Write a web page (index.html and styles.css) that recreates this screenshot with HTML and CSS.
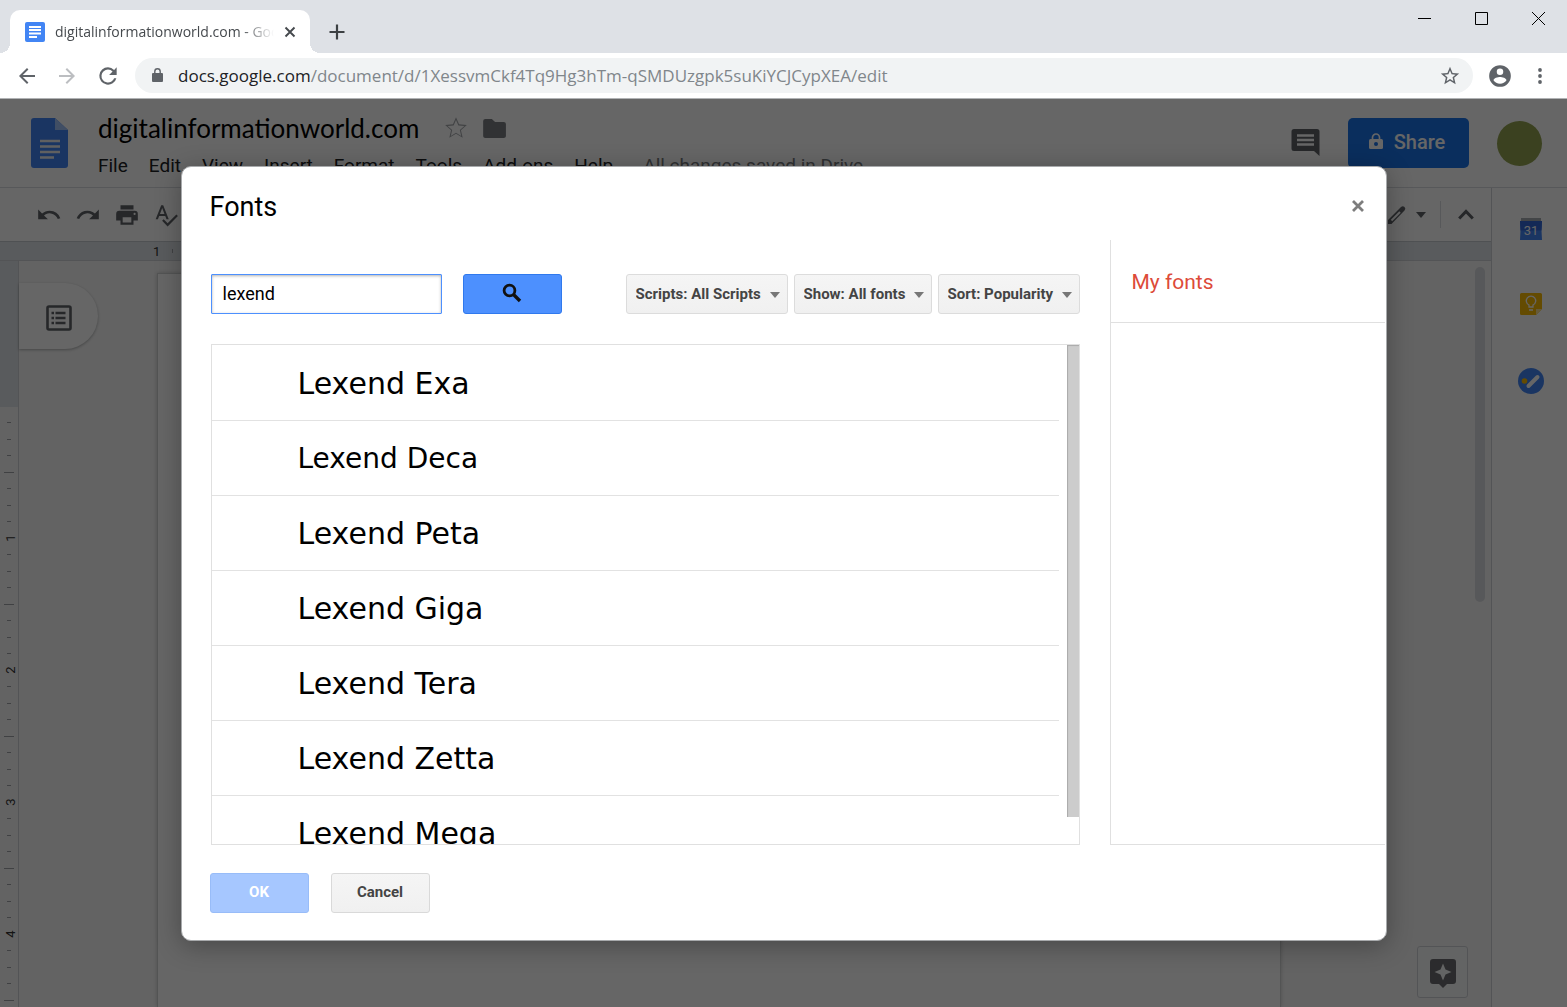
FILE: index.html
```html
<!DOCTYPE html>
<html lang="en">
  <head>
    <meta charset="UTF-8" />
    <meta name="viewport" content="width=device-width, initial-scale=1.0" />
    <title>digitalinformationworld.com - Google Docs</title>
    <link rel="stylesheet" href="styles.css">
  </head>

  <body>
    <!-- Browser window -->
    <div class="tabstrip">
      <div class="tab">
        <svg class="favicon" width="20" height="20" viewBox="0 0 20 20">
          <rect width="20" height="20" rx="2" fill="#4285f4" />
          <path d="M4 5h12M4 8h12M4 11.500h12M4 15h8" stroke="#fff" stroke-width="1.800" />
        </svg>
        <span class="tab-title">digitalinformationworld.com - Google Docs</span>
        <button class="icon-btn" aria-label="Close tab">
          <svg width="12" height="12" viewBox="0 0 12 12"><path d="M1.500 1.500l9 9M10.500 1.500l-9 9" stroke="#45494d" stroke-width="1.900" /></svg>
        </button>
      </div>
      <button class="icon-btn new-tab" aria-label="New tab">
        <svg width="16" height="16" viewBox="0 0 16 16"><path d="M8 .5v15M.5 8h15" stroke="#3c4043" stroke-width="2.200" /></svg>
      </button>
      <div class="window-controls">
        <button class="icon-btn" aria-label="Minimize">
          <svg width="13" height="13" viewBox="0 0 13 13"><path d="M0 6.500h13" stroke="#000" /></svg>
        </button>
        <button class="icon-btn" aria-label="Maximize">
          <svg width="13" height="13" viewBox="0 0 13 13"><path d="M.5.5h12v12H.5z" stroke="#000" fill="none" /></svg>
        </button>
        <button class="icon-btn" aria-label="Close">
          <svg width="13" height="13" viewBox="0 0 13 13"><path d="M0 0l13 13M13 0L0 13" stroke="#000" /></svg>
        </button>
      </div>
    </div>

    <div class="navbar">
      <div class="nav-buttons">
        <button class="icon-btn" aria-label="Back">
          <svg width="24" height="24" viewBox="0 0 24 24" fill="#5f6368"><path d="M20 11H7.830l5.590-5.590L12 4l-8 8 8 8 1.410-1.410L7.830 13H20z" /></svg>
        </button>
        <button class="icon-btn" aria-label="Forward">
          <svg width="24" height="24" viewBox="0 0 24 24" fill="#bcbec1"><path d="M12 4l-1.410 1.410L16.170 11H4v2h12.170l-5.580 5.590L12 20l8-8z" /></svg>
        </button>
        <button class="icon-btn" aria-label="Reload">
          <svg width="26" height="26" viewBox="0 0 24 24" fill="#5f6368"><path d="M17.650 6.350A7.960 7.960 0 0 0 12 4a8 8 0 1 0 7.730 10h-2.080A6 6 0 1 1 12 6c1.660 0 3.140.690 4.220 1.780L13 11h7V4z" /></svg>
        </button>
      </div>
      <div class="omnibox">
        <svg width="11" height="15" viewBox="0 0 11 15"><rect y="5" width="11" height="9" rx="1" fill="#5f6368" /><path d="M2.800 6V3.500a2.700 2.700 0 0 1 5.400 0V6" fill="none" stroke="#5f6368" stroke-width="1.400" /></svg>
        <span class="url"><span class="url-host">docs.google.com</span>/document/d/1XessvmCkf4Tq9Hg3hTm-qSMDUzgpk5suKiYCJCypXEA/edit</span>
        <button class="icon-btn" aria-label="Bookmark this page">
          <svg width="22" height="22" viewBox="0 0 24 24" fill="#5f6368"><path d="M22 9.240l-7.190-.620L12 2 9.190 8.630 2 9.240l5.460 4.730L5.820 21 12 17.270 18.180 21l-1.630-7.030zM12 15.400l-3.760 2.270 1-4.280-3.320-2.880 4.380-.380L12 6.100l1.710 4.040 4.380.380-3.320 2.880 1 4.280z" /></svg>
        </button>
      </div>
      <button class="icon-btn" aria-label="Profile">
        <svg width="26" height="26" viewBox="0 0 24 24" fill="#5f6368"><path d="M12 2a10 10 0 1 0 0 20 10 10 0 0 0 0-20zm0 3a3 3 0 1 1 0 6 3 3 0 0 1 0-6zm0 14.200a7.200 7.200 0 0 1-6-3.220c.030-1.990 4-3.080 6-3.080s5.970 1.090 6 3.080a7.200 7.200 0 0 1-6 3.220z" /></svg>
      </button>
      <button class="icon-btn menu-dots" aria-label="Menu">
        <svg width="4" height="16" viewBox="0 0 4 16" fill="#5f6368"><circle cx="2" cy="2" r="1.900" /><circle cx="2" cy="8" r="1.900" /><circle cx="2" cy="14" r="1.900" /></svg>
      </button>
    </div>

    <!-- Docs -->
    <div class="docs">
      <header class="docs-header">
        <svg width="37" height="50" viewBox="0 0 37 50">
          <path d="M3 0h21l13 12v35a3 3 0 0 1-3 3H3a3 3 0 0 1-3-3V3a3 3 0 0 1 3-3z" fill="#4285f4" />
          <path d="M24 0l13 12H24z" fill="#a1c2fa" />
          <path d="M9 23h20M9 28.500h20M9 34h20M9 39.500h14" stroke="#f1f1f1" stroke-width="2.600" />
        </svg>
        <div class="docs-heading">
          <div class="title-row">
            <input class="doc-title" type="text" aria-label="Rename" value="digitalinformationworld.com" />
            <button class="icon-btn" aria-label="Star">
              <svg width="26" height="26" viewBox="0 0 24 24" fill="#a4a7ab"><path d="M22 9.240l-7.190-.620L12 2 9.190 8.630 2 9.240l5.460 4.730L5.820 21 12 17.270 18.180 21l-1.630-7.030zM12 16.400l-4.800 2.900 1.250-5.450-4.200-3.650 5.550-.500L12 4.600l2.200 5.100 5.550.500-4.200 3.650 1.250 5.450z" /></svg>
            </button>
            <button class="icon-btn" aria-label="Move">
              <svg width="26" height="24" viewBox="0 0 24 24" preserveAspectRatio="none" fill="#7b7e82"><path d="M10 3H4a2 2 0 0 0-2 2v15c0 1.100.9 2 2 2h17c1.100 0 2-.9 2-2V8a2 2 0 0 0-2-2h-8z" /></svg>
            </button>
          </div>
          <div class="menubar">
            <button>File</button>
            <button>Edit</button>
            <button>View</button>
            <button>Insert</button>
            <button>Format</button>
            <button>Tools</button>
            <button>Add-ons</button>
            <button>Help</button>
            <span class="save-state">All changes saved in Drive</span>
          </div>
        </div>
        <button class="icon-btn comments" aria-label="Comments">
          <svg width="29" height="29" viewBox="0 0 29 29"><path d="M3 1h23a2.500 2.500 0 0 1 2.500 2.500V28L23 23H3a2.500 2.500 0 0 1-2.500-2.500v-17A2.500 2.500 0 0 1 3 1z" fill="#5f6368" /><path d="M6 7.500h17M6 12h17M6 16.500h17" stroke="#fff" stroke-width="2.500" /></svg>
        </button>
        <button class="share">
          <svg width="14" height="17" viewBox="0 0 14 17"><path d="M3.500 7V4.500a3.500 3.500 0 0 1 7 0V7" fill="none" stroke="#fff" stroke-width="1.700" /><rect y="6" width="14" height="10" rx="1.500" fill="#fff" /><circle cx="7" cy="11" r="2" fill="#1a73e8" /></svg>
          Share
        </button>
        <div class="avatar"></div>
      </header>

      <div class="workspace">
        <main class="editor">
          <div class="toolbar">
            <button class="icon-btn" aria-label="Undo">
              <svg width="26" height="26" viewBox="0 0 24 24" fill="#5f6368"><path d="M12.500 8c-2.650 0-5.050.990-6.900 2.600L2 7v9h9l-3.620-3.620a8 8 0 0 1 12.700 3.390l2.370-.780A10.500 10.500 0 0 0 12.500 8z" /></svg>
            </button>
            <button class="icon-btn" aria-label="Redo">
              <svg width="26" height="26" viewBox="0 0 24 24" fill="#5f6368"><path d="M18.400 10.600A10.500 10.500 0 0 0 1.540 15l2.360.780a8 8 0 0 1 12.700-3.390L13 16h9V7z" /></svg>
            </button>
            <button class="icon-btn" aria-label="Print">
              <svg width="26" height="26" viewBox="0 0 24 24" fill="#5f6368"><path d="M19 8H5a3 3 0 0 0-3 3v6h4v4h12v-4h4v-6a3 3 0 0 0-3-3zm-3 11H8v-5h8zm3-7a1 1 0 1 1 0-2 1 1 0 0 1 0 2zM18 3H6v4h12z" /></svg>
            </button>
            <button class="icon-btn" aria-label="Spelling and grammar check">
              <svg width="26" height="26" viewBox="0 0 24 24" fill="#5f6368"><path d="M12.450 16h2.090L9.430 3H7.570L2.460 16h2.090l1.120-3h5.640zm-6.020-5L8.500 5.480 10.570 11zm15.160.590l-8.090 8.090L9.830 16l-1.410 1.410 5.090 5.090L23 13z" /></svg>
            </button>
            <div class="toolbar-end">
              <button class="icon-btn" aria-label="Editing mode">
                <svg width="22" height="22" viewBox="0 0 22 22"><path d="M2 20v-4L15 3a2.500 2.500 0 0 1 3.500 0 2.500 2.500 0 0 1 0 3.500L5.500 20z" fill="#5f6368" /><path d="M5.500 16.500L14 8" stroke="#fff" stroke-width="2" /></svg>
                <svg width="10" height="6" viewBox="0 0 10 6"><path d="M0 0h10L5 6z" fill="#5f6368" /></svg>
              </button>
              <span class="toolbar-divider"></span>
              <button class="icon-btn" aria-label="Hide the menus">
                <svg width="16" height="11" viewBox="0 0 16 11"><path d="M1.200 9.500L8 2.500l6.800 7" fill="none" stroke="#5f6368" stroke-width="3" /></svg>
              </button>
            </div>
          </div>
          <div class="ruler-top"><span>1</span><i></i></div>
          <div class="canvas">
            <svg class="ruler-left" width="18" height="747">
              <defs>
                <g id="inch">
                  <path d="M7 15.500h4M7 32.500h4M7 48.500h4M4 65.500h10M7 81.500h4M7 98.500h4M7 114.500h4" stroke="#a0a3a7" />
                </g>
              </defs>
              <rect width="18" height="146" fill="#dfe3e8" />
              <use href="#inch" y="146" />
              <use href="#inch" y="278" />
              <use href="#inch" y="410" />
              <use href="#inch" y="542" />
              <use href="#inch" y="674" />
              <text transform="translate(15 277) rotate(-90)">1</text>
              <text transform="translate(15 409) rotate(-90)">2</text>
              <text transform="translate(15 541) rotate(-90)">3</text>
              <text transform="translate(15 673) rotate(-90)">4</text>
            </svg>
            <button class="outline-btn" aria-label="Show document outline">
              <svg width="26" height="26" viewBox="0 0 26 26"><rect x="1.500" y="1.500" width="23" height="23" rx="1.500" fill="none" stroke="#5f6368" stroke-width="2.600" /><path d="M5.500 8H8M5.500 13H8M5.500 18H8M9.500 8h10M9.500 13h10M9.500 18h10" stroke="#5f6368" stroke-width="2.500" /></svg>
            </button>
            <div class="paper"></div>
            <div class="page-scroll"></div>
            <button class="explore" aria-label="Explore">
              <svg width="26" height="30" viewBox="0 0 26 30"><path d="M3 0h20a3 3 0 0 1 3 3v19a3 3 0 0 1-3 3h-6l-4 4-4-4H3a3 3 0 0 1-3-3V3a3 3 0 0 1 3-3z" fill="#6b6d70" /><path d="M13 4.500l2.500 6 6 2.500-6 2.500-2.500 6-2.500-6-6-2.500 6-2.500z" fill="#f8f9fa" /></svg>
            </button>
          </div>
        </main>
        <aside class="side-panel">
          <button class="icon-btn" aria-label="Calendar">
            <svg width="22" height="22" viewBox="0 0 22 22"><path d="M1 0h20v5H1z" fill="#a9acb1" /><path d="M0 3h22l-.5 9.500.5 9.500H0l.5-9.500z" fill="#4285f4" /><path d="M0 3h22l-.5 9.500H.5z" fill="#3367d6" /><text class="cal-day" x="11" y="17">31</text></svg>
          </button>
          <button class="icon-btn" aria-label="Keep">
            <svg width="22" height="22" viewBox="0 0 22 22"><path d="M1.500 0h19A1.500 1.500 0 0 1 22 1.500V16l-6 6H1.500A1.500 1.500 0 0 1 0 20.500v-19A1.500 1.500 0 0 1 1.500 0z" fill="#fbbc04" /><path d="M16 22v-6h6z" fill="#fde293" /><path d="M9 14v-2a4.700 4.700 0 1 1 4 0v2zM9 17h4" fill="none" stroke="#fff" stroke-width="1.300" /></svg>
          </button>
          <button class="icon-btn" aria-label="Tasks">
            <svg width="26" height="26" viewBox="0 0 26 26"><circle cx="13" cy="13" r="13" fill="#4285f4" /><circle cx="6.500" cy="13" r="2.800" fill="#fbbc04" /><path d="M10.500 18l9-9" stroke="#fff" stroke-width="4" stroke-linecap="round" /></svg>
          </button>
        </aside>
      </div>

      <!-- Fonts dialog -->
      <div class="overlay">
        <div class="dialog" role="dialog" aria-labelledby="dialogTitle">
          <div class="dialog-head">
            <h2 id="dialogTitle">Fonts</h2>
            <button class="icon-btn" aria-label="Close dialog">
              <svg width="12" height="12" viewBox="0 0 12 12"><path d="M1 1l10 10M11 1L1 11" stroke="#7d7d7d" stroke-width="2.800" /></svg>
            </button>
          </div>
          <div class="dialog-body">
            <section class="picker">
              <form class="filters">
                <input class="search-input" type="text" aria-label="Search fonts" value="lexend" />
                <button class="btn btn-search" type="button" aria-label="Search">
                  <svg width="20" height="20" viewBox="0 0 20 20"><circle cx="7.500" cy="7.500" r="5.400" fill="none" stroke="#111" stroke-width="2.800" /><path d="M11.500 11.500l6.500 6.500" stroke="#111" stroke-width="3.400" /></svg>
                </button>
                <div class="selects">
                  <span class="select-box"><select aria-label="Scripts"><option>Scripts: All Scripts</option></select></span>
                  <span class="select-box"><select aria-label="Show"><option>Show: All fonts</option></select></span>
                  <span class="select-box"><select aria-label="Sort"><option>Sort: Popularity</option></select></span>
                </div>
              </form>
              <div class="font-list">
                <ul>
                  <li>Lexend Exa</li>
                  <li class="deca">Lexend Deca</li>
                  <li>Lexend Peta</li>
                  <li>Lexend Giga</li>
                  <li>Lexend Tera</li>
                  <li>Lexend Zetta</li>
                  <li>Lexend Mega</li>
                </ul>
                <div class="list-scroll"></div>
              </div>
            </section>
            <section class="my-fonts">
              <h3>My fonts</h3>
            </section>
          </div>
          <div class="dialog-foot">
            <button class="btn btn-ok" disabled>OK</button>
            <button class="btn">Cancel</button>
          </div>
        </div>
      </div>
    </div>
  </body>
</html>
```

FILE: styles.css
```css
* {
  box-sizing: border-box;
}

body {
  margin: 0;
  height: 100vh;
  display: flex;
  flex-direction: column;
  overflow: hidden;
  font-family: Roboto, Arial, sans-serif;
  color: #000;
}

button,
input,
select {
  font-family: inherit;
}

svg {
  display: block;
  flex: none;
}

.icon-btn {
  display: flex;
  align-items: center;
  justify-content: center;
  padding: 0;
  border: none;
  background: none;
}

/* browser */
.tabstrip {
  display: flex;
  height: 53px;
  padding-left: 10px;
  background: #dee1e6;
}

.tab {
  display: flex;
  align-items: center;
  gap: 10px;
  width: 300px;
  margin-top: 10px;
  padding: 0 14px 0 15px;
  border-radius: 10px 10px 0 0;
  background: #fff;
  position: relative;
}

.tab::before,
.tab::after {
  content: "";
  position: absolute;
  bottom: 0;
  width: 10px;
  height: 10px;
}

.tab::before {
  left: -10px;
  background: radial-gradient(circle at 0 0, #dee1e6 10px, #fff 10px);
}

.tab::after {
  right: -10px;
  background: radial-gradient(circle at 100% 0, #dee1e6 10px, #fff 10px);
}

.tab-title {
  flex: 1;
  overflow: hidden;
  white-space: nowrap;
  font: 14px/20px "Open Sans", sans-serif;
  color: #45494d;
  -webkit-mask-image: linear-gradient(to right, #000 85%, transparent);
  mask-image: linear-gradient(to right, #000 85%, transparent);
}

.new-tab {
  margin: 10px 0 0 19px;
}

.window-controls {
  display: flex;
  align-items: flex-start;
  gap: 44px;
  margin-left: auto;
  padding: 12px 22px;
}

.navbar {
  display: flex;
  align-items: center;
  gap: 14px;
  height: 46px;
  padding: 0 25px 0 15px;
  border-bottom: 1px solid #b0b2b4;
}

.nav-buttons {
  display: flex;
  align-items: center;
  gap: 16px;
}

.omnibox {
  flex: 1;
  display: flex;
  align-items: center;
  gap: 15px;
  height: 35px;
  padding: 0 12px 0 17px;
  border-radius: 18px;
  background: #f1f3f4;
}

.url {
  flex: 1;
  font: 17px/24px "Open Sans", sans-serif;
  color: #80868b;
}

.url-host {
  color: #202124;
}

.menu-dots {
  margin-left: 11px;
}

/* docs */
.docs {
  flex: 1;
  display: flex;
  flex-direction: column;
  min-height: 0;
  position: relative;
}

.docs-header {
  display: flex;
  align-items: flex-start;
  height: 89px;
  padding: 19px 25px 0 31px;
  border-bottom: 1px solid #dadce0;
}

.docs-heading {
  flex: 1;
  margin-left: 20px;
}

.title-row {
  display: flex;
  align-items: center;
  gap: 12px;
  height: 20px;
  padding-left: 10px;
}

.doc-title {
  width: 333px;
  padding: 0;
  border: none;
  background: none;
  font-family: Lato, sans-serif;
  font-size: 26px;
  line-height: 32px;
}

.menubar {
  display: flex;
  gap: 1px;
  margin-top: 17px;
}

.menubar button {
  padding: 0 10px;
  border: none;
  background: none;
  font-size: 19px;
  line-height: 22px;
  color: #202124;
}

.save-state {
  margin-left: 19px;
  font-size: 19px;
  line-height: 22px;
  color: #777a7e;
}

.comments {
  margin: 10px 28px 0 0;
}

.share {
  display: flex;
  align-items: center;
  justify-content: center;
  gap: 11px;
  width: 121px;
  height: 50px;
  padding: 0 3px 3px 0;
  border: none;
  border-radius: 5px;
  background: #1a73e8;
  color: #fff;
  font-size: 20px;
  font-weight: 500;
}

.avatar {
  width: 45px;
  height: 45px;
  margin: 3px 0 0 28px;
  border-radius: 50%;
  background: #93a352;
}

.workspace {
  flex: 1;
  display: flex;
  min-height: 0;
}

.editor {
  flex: 1;
  display: flex;
  flex-direction: column;
}

.toolbar {
  display: flex;
  align-items: center;
  gap: 13px;
  height: 53px;
  padding: 0 17px 0 36px;
}

.toolbar-end {
  display: flex;
  align-items: center;
  gap: 14px;
  margin-left: auto;
}

.toolbar-end .icon-btn {
  gap: 8px;
}

.toolbar-divider {
  width: 1px;
  height: 27px;
  margin-right: 3px;
  background: #dadce0;
}

.ruler-top {
  display: flex;
  align-items: center;
  gap: 12px;
  height: 20px;
  padding-left: 153px;
  border-top: 1px solid #c6cacf;
  border-bottom: 1px solid #d0d3d7;
  background: #dfe3e8;
  font-size: 13px;
  color: #333;
}

.ruler-top i {
  width: 1px;
  height: 4px;
  background: #a0a3a7;
}

.canvas {
  flex: 1;
  display: flex;
  min-height: 0;
  overflow: hidden;
  position: relative;
  background: #f8f8f8;
}

.ruler-left {
  width: 19px;
  border-right: 1px solid #d0d3d7;
  font-size: 13px;
  fill: #333;
}

.ruler-left text {
  text-anchor: middle;
}

.outline-btn {
  display: flex;
  align-items: center;
  width: 79px;
  height: 66px;
  margin: 22px 59px 0 0;
  padding: 4px 0 0 27px;
  border: none;
  border-radius: 0 33px 33px 0;
  background: #fff;
  box-shadow: 0 1px 3px rgba(60, 64, 67, 0.4);
}

.paper {
  flex: 1;
  margin: 12px 210px 0 0;
  border: 1px solid #d0d1d3;
  border-bottom: none;
  background: #fff;
  box-shadow: 0 0 4px rgba(0, 0, 0, 0.2);
}

.page-scroll {
  position: absolute;
  top: 6px;
  right: 6px;
  width: 10px;
  height: 335px;
  border-radius: 5px;
  background: #dadce0;
}

.explore {
  position: absolute;
  right: 23px;
  bottom: 9px;
  display: flex;
  align-items: center;
  justify-content: center;
  width: 51px;
  height: 52px;
  padding: 3px 0 0;
  border: 1px solid #d0d3d7;
  border-radius: 3px;
  background: #f8f9fa;
}

.side-panel {
  display: flex;
  flex-direction: column;
  align-items: center;
  gap: 53px;
  width: 76px;
  padding: 30px 0 0 2px;
  border-left: 1px solid #d0d3d7;
}

.cal-day {
  font-size: 13px;
  fill: #fff;
  text-anchor: middle;
}

/* dialog */
.overlay {
  position: absolute;
  inset: 0;
  display: flex;
  align-items: center;
  justify-content: center;
  background: rgba(0, 0, 0, 0.6);
}

.dialog {
  width: 90%;
  max-width: 1206px;
  border: 1px solid #a8aaac;
  border-radius: 10px;
  background: #fff;
  box-shadow: 0 5px 26px rgba(0, 0, 0, 0.3);
}

.dialog-head {
  display: flex;
  justify-content: space-between;
  height: 73px;
  padding: 24px 22px 17px 28px;
}

.dialog h2,
.dialog h3 {
  margin: 0;
  font-weight: 400;
}

.dialog h2 {
  font-size: 27px;
  line-height: 32px;
}

.dialog-head .icon-btn {
  height: 31px;
}

.dialog-body {
  display: flex;
  gap: 30px;
  padding: 0 1px 0 29px;
}

.picker {
  flex: 1;
}

.filters {
  display: flex;
  padding: 34px 0 30px;
}

.search-input {
  width: 231px;
  height: 40px;
  margin-right: 21px;
  padding: 0 11px;
  border: 1px solid #4d90fe;
  border-radius: 1px;
  box-shadow: inset 0 1px 3px rgba(0, 0, 0, 0.3);
  font-size: 18px;
}

.btn {
  display: flex;
  align-items: center;
  justify-content: center;
  width: 99px;
  height: 40px;
  padding: 0 0 2px;
  border: 1px solid #d9d9d9;
  border-radius: 3px;
  background: linear-gradient(#f5f5f5, #f0f0f0);
  color: #444;
  font-size: 15px;
  font-weight: 700;
}

.btn-search {
  border-color: #3079ed;
  background: #4d90fe;
}

.btn-ok {
  border-color: #98bcf8;
  background: #a6c7ff;
  color: #fff;
}

.selects {
  display: flex;
  gap: 6px;
  margin-left: auto;
}

.select-box {
  position: relative;
}

.select-box::after {
  content: "";
  position: absolute;
  top: 18px;
  right: 8px;
  border: 5px solid transparent;
  border-top: 6px solid #777;
  border-bottom: none;
  pointer-events: none;
}

.select-box select {
  height: 40px;
  padding: 0 25px 0 9px;
  border: 1px solid #dcdcdc;
  border-radius: 3px;
  appearance: none;
  background: linear-gradient(#f5f5f5, #f0f0f0);
  color: #444;
  font-size: 15px;
  font-weight: 700;
}

.font-list {
  display: flex;
  height: 501px;
  border: 1px solid #e0e0e0;
  overflow: hidden;
}

.font-list ul {
  flex: 1;
  margin: 0 8px 0 0;
  padding: 0;
  list-style: none;
}

.font-list li {
  height: 75px;
  padding-left: 86px;
  border-top: 1px solid #e2e2e2;
  font-family: "DejaVu Sans", sans-serif;
  font-size: 30px;
  line-height: 76px;
}

.font-list li:first-child {
  border-top-color: transparent;
}

.font-list .deca {
  font-size: 28px;
}

.list-scroll {
  width: 12px;
  height: 472px;
  background: #ccc;
  box-shadow: inset 1px 1px 1px #aaa;
}

.my-fonts {
  width: 275px;
  border: 1px solid #e0e0e0;
  border-width: 0 0 1px 1px;
}

.my-fonts h3 {
  padding: 30px 21px 28px;
  border-bottom: 1px solid #e0e0e0;
  font-size: 21px;
  line-height: 24px;
  color: #dd4b39;
}

.dialog-foot {
  display: flex;
  gap: 22px;
  padding: 28px 28px 27px;
}
```
